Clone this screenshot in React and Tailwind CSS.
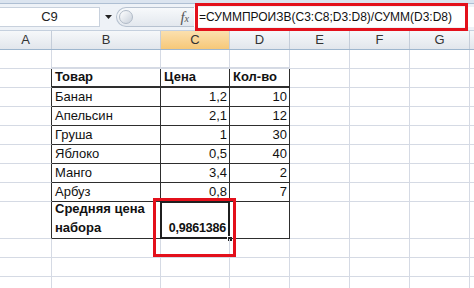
import React from 'react';

const COLS = [
    { key: 'A', w: 'w-[52px]' },
    { key: 'B', w: 'w-[109px]' },
    { key: 'C', w: 'w-[69px]' },
    { key: 'D', w: 'w-[60px]' },
    { key: 'E', w: 'w-[60px]' },
    { key: 'F', w: 'w-[60px]' },
    { key: 'G', w: 'w-[60px]' },
    { key: 'H', w: 'w-[60px]' },
];

const GRID = 'border-[#d5dae4]';
const DARK = 'border-[#2e2e2e]';

// rows below the header; t = table row kind
const ROWS = [
    { h: 'h-[19px]', t: 'above' },
    { h: 'h-[19px]', t: 'head', cells: ['Товар', 'Цена', 'Кол-во'] },
    { h: 'h-[19px]', t: 'body', cells: ['Банан', '1,2', '10'] },
    { h: 'h-[19px]', t: 'body', cells: ['Апельсин', '2,1', '12'] },
    { h: 'h-[19px]', t: 'body', cells: ['Груша', '1', '30'] },
    { h: 'h-[19px]', t: 'body', cells: ['Яблоко', '0,5', '40'] },
    { h: 'h-[19px]', t: 'body', cells: ['Манго', '3,4', '2'] },
    { h: 'h-[19px]', t: 'body', cells: ['Арбуз', '0,8', '7'] },
    { h: 'h-[37px]', t: 'total' },
    { h: 'h-[19px]', t: 'none' },
    { h: 'h-[19px]', t: 'none' },
    { h: 'h-[19px]', t: 'none' },
];

function cellBorders(row, ci) {
    const inTable = ['head', 'body', 'total'].includes(row.t);
    const tableCol = ci >= 1 && ci <= 3;
    let right = `border-r ${GRID}`;
    let bottom = `border-b ${GRID}`;
    if (inTable && ci <= 3) right = `border-r border-r-[#2e2e2e]`;
    if (tableCol) {
        if (row.t === 'above' || row.t === 'head') bottom = `border-b-2 ${DARK}`;
        else if (row.t === 'body' || row.t === 'total') bottom = `border-b border-b-[#2e2e2e]`;
    }
    return `${right} ${bottom}`;
}

function Cell({ row, ci, w }) {
    const borders = cellBorders(row, ci);
    let content = null;
    if (row.cells && ci >= 1 && ci <= 3) {
        const text = row.cells[ci - 1];
        const right = row.t === 'body' && ci > 1;
        content = (
            <span className={`${right ? 'ml-auto pr-[2px]' : 'pl-[3px]'} ${row.t === 'head' ? 'font-bold' : ''}`}>
                {text}
            </span>
        );
    }
    if (row.t === 'total' && ci === 1) {
        content = (
            <span className="pl-[3px] font-bold leading-[19px]">
                Средняя цена<br />набора
            </span>
        );
    }
    if (row.t === 'total' && ci === 2) {
        content = (
            <>
                <span className="ml-auto pr-[3px] font-bold text-[12.5px] tracking-[-0.2px]">0,9861386</span>
                {/* active cell outline + fill handle */}
                <div className="absolute -left-px -top-px right-[-1px] bottom-[-1px] border-2 border-[#1f1f1f]" />
                <div className="absolute right-[-4px] bottom-[-4px] w-[6px] h-[6px] bg-[#1f1f1f] border border-white" />
            </>
        );
    }
    return (
        <div className={`relative shrink-0 ${w} ${borders} flex items-end pb-[1px] leading-[17px]`}>
            {content}
        </div>
    );
}

export default function App() {
    return (
        <div
            className="relative w-[474px] h-[288px] overflow-hidden bg-white text-[#111] text-[13px]"
            style={{ fontFamily: '"Liberation Sans", Arial, sans-serif' }}
        >
            {/* ribbon bottom strip */}
            <div className="h-[4px] bg-[#dbe4ef] border-b border-[#aebfd3]" />

            {/* formula bar */}
            <div className="h-[27px] flex items-center bg-[#eef2f7] border-b border-[#c5d0de]">
                <div className="w-[100px] h-[20px] bg-white border border-l-0 border-[#c8d1dd] flex items-center justify-center text-[13px] text-[#222]">
                    C9
                </div>
                <div className="w-[16px] flex items-center justify-center">
                    <svg width="7" height="4" viewBox="0 0 7 4"><path d="M0 0h7L3.5 4z" fill="#222" /></svg>
                </div>
                <div className="w-[78px] h-[20px] rounded-l-full border border-r-0 border-[#b7c2d0] bg-gradient-to-b from-[#f7f9fb] to-[#e3e8ee] flex items-center justify-between pl-[2px] pr-[5px]">
                    <div className="w-[14px] h-[14px] rounded-full bg-gradient-to-br from-[#ffffff] to-[#c9d1db] border border-[#b0bac7]" />
                    <span className="italic text-[#555] text-[15px] leading-none" style={{ fontFamily: '"Liberation Serif", serif' }}>
                        f<span className="text-[10px]">x</span>
                    </span>
                </div>
                <div className="flex-1 h-[20px] bg-white flex items-center pl-[5px] text-[12px] text-[#111] whitespace-nowrap">
                    =СУММПРОИЗВ(C3:C8;D3:D8)/СУММ(D3:D8)
                </div>
            </div>

            {/* column headers */}
            <div className="flex h-[19px] border-b border-[#9eb6ce]">
                {COLS.map((c) => (
                    <div
                        key={c.key}
                        className={`shrink-0 ${c.w} border-r border-[#c5cdd9] flex items-center justify-center text-[13px] text-[#333] ${
                            c.key === 'C'
                                ? 'bg-gradient-to-b from-[#fbe0ae] to-[#f6c878]'
                                : 'bg-gradient-to-b from-[#f6f8fa] to-[#e2e6ec]'
                        }`}
                    >
                        {c.key === 'H' ? '' : c.key}
                    </div>
                ))}
            </div>

            {/* sheet */}
            {ROWS.map((row, ri) => (
                <div key={ri} className={`flex ${row.h}`}>
                    {COLS.map((c, ci) => (
                        <Cell key={c.key} row={row} ci={ci} w={c.w} />
                    ))}
                </div>
            ))}

            {/* red annotation boxes */}
            <div className="absolute left-[195px] top-[3px] w-[273px] h-[28px] border-[3px] border-[#e3101b]" />
            <div className="absolute left-[153px] top-[198px] w-[83px] h-[59px] border-[3px] border-[#e3101b]" />
        </div>
    );
}
